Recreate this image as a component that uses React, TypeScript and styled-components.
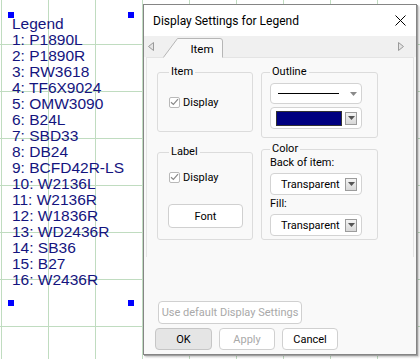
import React from 'react';
import styled, { createGlobalStyle } from 'styled-components';

const Global = createGlobalStyle`
  html, body { margin: 0; padding: 0; background: #fff; }
  body { width: 420px; height: 359px; overflow: hidden; }
`;

const UI = `Roboto, 'Liberation Sans', sans-serif`;

const Canvas = styled.div`
  width: 420px;
  height: 359px;
  display: flex;
  align-items: flex-start;
  background-color: #fff;
  background-image:
    linear-gradient(to right, #c0dcc0 1px, transparent 1px),
    linear-gradient(to bottom, #c0dcc0 1px, transparent 1px);
  background-size: 47px 47px;
  background-position: 1px -3px;
`;

const LegendArea = styled.div`
  position: relative;
  flex: 0 0 143px;
  height: 359px;
  box-sizing: border-box;
  padding: 16px 0 0 12px;
`;

const Handle = styled.div<{ $x: number; $y: number }>`
  position: absolute;
  left: ${(p) => p.$x}px;
  top: ${(p) => p.$y}px;
  width: 6px;
  height: 6px;
  background: #0000ff;
`;

const LegendList = styled.div`
  display: flex;
  flex-direction: column;
  font-family: 'Liberation Sans', Arial, sans-serif;
  font-size: 15.5px;
  line-height: 16px;
  color: #14147e;
  white-space: nowrap;
`;

const Dialog = styled.div`
  margin-top: 4px;
  flex: 0 0 274px;
  height: 351px;
  box-sizing: border-box;
  border: 1px solid #858585;
  box-shadow: 1px 1px 0 #a0a0a0, 2px 2px 2px rgba(0, 0, 0, 0.25);
  background: #f9f9f9;
  display: flex;
  flex-direction: column;
  font-family: ${UI};
  font-size: 11px;
  color: #000;
`;

const TitleBar = styled.div`
  height: 31px;
  flex: 0 0 31px;
  background: #fff;
  display: flex;
  align-items: center;
  justify-content: space-between;
  padding: 0 10px 0 9px;
`;

const Title = styled.span`
  font-size: 12px;
  color: #000;
  white-space: nowrap;
`;

const TabStrip = styled.div`
  height: 21px;
  flex: 0 0 21px;
  background: #f0f0f0;
  display: flex;
  align-items: flex-end;
  padding: 0 12px 0 4px;
`;

const StripArrow = styled.svg`
  align-self: center;
  flex: 0 0 auto;
`;

const Spacer = styled.div`
  flex: 1;
`;

const Tab = styled.div`
  position: relative;
  z-index: 1;
  margin-left: 9px;
  margin-bottom: -1px;
  width: 60px;
  height: 20px;
  box-sizing: border-box;
  padding: 1px 0 0 18px;
  display: flex;
  align-items: center;
  justify-content: center;
  font-size: 11.5px;
`;

const TabShape = styled.svg`
  position: absolute;
  inset: 0;
  z-index: -1;
`;

const Body = styled.div`
  flex: 1;
  display: flex;
  flex-direction: column;
`;

const TabPage = styled.div`
  margin: 0 2px;
  height: 200px;
  box-sizing: border-box;
  border: 1px solid #e4e4e4;
  border-bottom: none;
  padding: 7px 0 0 10px;
  display: grid;
  grid-template-columns: 96px 117px;
  column-gap: 8px;
  align-items: start;
`;

const Column = styled.div<{ $gap: number }>`
  display: flex;
  flex-direction: column;
  gap: ${(p) => p.$gap}px;
`;

const Group = styled.fieldset<{ $h: number; $pt: number; $pl: number }>`
  margin: 0;
  height: ${(p) => p.$h}px;
  box-sizing: border-box;
  border: 1px solid #dcdcdc;
  border-radius: 3px;
  padding: ${(p) => p.$pt}px 0 0 ${(p) => p.$pl}px;
  display: flex;
  flex-direction: column;
  align-items: flex-start;
  min-width: 0;
`;

const GroupLabel = styled.legend`
  padding: 0 2px;
  margin-left: 0;
  font-size: 11px;
  line-height: 14px;
`;

const CheckRow = styled.label`
  display: flex;
  align-items: center;
  gap: 3px;
  height: 14px;
  font-size: 11px;
`;

const CheckBox = styled.span`
  width: 11px;
  height: 11px;
  box-sizing: border-box;
  border: 1px solid #b9b9b9;
  border-radius: 2px;
  background: #fff;
  display: flex;
  align-items: center;
  justify-content: center;
`;

const Button = styled.button<{ $w: number; $h: number; $primary?: boolean }>`
  width: ${(p) => p.$w}px;
  height: ${(p) => p.$h}px;
  box-sizing: border-box;
  border: 1px solid ${(p) => (p.$primary ? '#c6c6c6' : '#d0d0d0')};
  border-radius: 4px;
  background: ${(p) => (p.$primary ? '#e5e5e5' : '#fff')};
  font-family: ${UI};
  font-size: 11px;
  color: #000;
  padding: 0;
  white-space: nowrap;
  &:disabled {
    color: #a9a9a9;
  }
`;

const FontButton = styled(Button)`
  margin-top: 20px;
  margin-left: -1px;
`;

const Dropdown = styled.div<{ $h: number }>`
  width: 92px;
  height: ${(p) => p.$h}px;
  box-sizing: border-box;
  border: 1px solid #d3d3d3;
  border-radius: 4px;
  background: #fff;
  display: flex;
  align-items: center;
  padding: 0 4px 0 5px;
  flex: 0 0 auto;
`;

const LineSample = styled.div`
  width: 61px;
  height: 1px;
  background: #000;
  margin-left: 2px;
`;

const Swatch = styled.div`
  width: 66px;
  height: 15px;
  box-sizing: border-box;
  border: 1px solid #333;
  background: #000080;
`;

const DropText = styled.span`
  padding-left: 5px;
  font-size: 11px;
  color: #000;
`;

const DropButton = styled.span`
  width: 12px;
  height: 13px;
  box-sizing: border-box;
  border: 1px solid #9c9c9c;
  background: linear-gradient(#f4f4f4, #d8d8d8);
  display: flex;
  align-items: center;
  justify-content: center;
`;

const FieldCaption = styled.div<{ $mt: number }>`
  margin-top: ${(p) => p.$mt}px;
  height: 14px;
  line-height: 14px;
  font-size: 11px;
`;

const Stack = styled.div<{ $mt: number }>`
  margin-top: ${(p) => p.$mt}px;
  display: flex;
  flex-direction: column;
`;

const Footer = styled.div`
  margin-top: auto;
  display: flex;
  flex-direction: column;
  padding-bottom: 4px;
`;

const DefaultRow = styled.div`
  padding-left: 14px;
  margin-bottom: 4px;
`;

const ButtonRow = styled.div`
  display: flex;
  gap: 7px;
  padding-left: 11px;
`;

const Check = () => (
  <svg width="9" height="8" viewBox="0 0 9 8">
    <path d="M1 4.2 L3.4 6.5 L8 1.2" fill="none" stroke="#8a8a8a" strokeWidth="1.2" />
  </svg>
);

const DownTri = ({ color = '#555' }: { color?: string }) => (
  <svg width="7" height="4" viewBox="0 0 7 4">
    <path d="M0 0 H7 L3.5 4 Z" fill={color} />
  </svg>
);

const CheckField = () => (
  <CheckRow>
    <CheckBox>
      <Check />
    </CheckBox>
    Display
  </CheckRow>
);

const ChoiceDropdown = ({ text }: { text: string }) => (
  <Dropdown $h={22}>
    <DropText>{text}</DropText>
    <Spacer />
    <DropButton>
      <DownTri />
    </DropButton>
  </Dropdown>
);

const items = [
  'Legend',
  '1: P1890L',
  '2: P1890R',
  '3: RW3618',
  '4: TF6X9024',
  '5: OMW3090',
  '6: B24L',
  '7: SBD33',
  '8: DB24',
  '9: BCFD42R-LS',
  '10: W2136L',
  '11: W2136R',
  '12: W1836R',
  '13: WD2436R',
  '14: SB36',
  '15: B27',
  '16: W2436R',
];

export default function App() {
  return (
    <>
      <Global />
      <Canvas>
        <LegendArea>
          <Handle $x={8} $y={12} />
          <Handle $x={128} $y={12} />
          <Handle $x={8} $y={300} />
          <Handle $x={128} $y={300} />
          <LegendList>
            {items.map((t) => (
              <span key={t}>{t}</span>
            ))}
          </LegendList>
        </LegendArea>

        <Dialog>
          <TitleBar>
            <Title>Display Settings for Legend</Title>
            <svg width="11" height="11" viewBox="0 0 11 11">
              <path d="M0.5 0.5 L10.5 10.5 M10.5 0.5 L0.5 10.5" stroke="#000" strokeWidth="1" />
            </svg>
          </TitleBar>

          <TabStrip>
            <StripArrow width="6" height="9" viewBox="0 0 6 9">
              <path d="M5.5 0.5 V8.5 L0.5 4.5 Z" fill="#e4e4e4" stroke="#9a9a9a" strokeWidth="1" />
            </StripArrow>
            <Tab>
              <TabShape width="60" height="20" viewBox="0 0 60 20">
                <path d="M0 20 L14.5 0.5 H57 Q59.5 0.5 59.5 3 V20 Z" fill="#f9f9f9" />
                <path d="M0.3 19.5 L14.5 0.5 H57 Q59.5 0.5 59.5 3 V19.5" fill="none" stroke="#b6b6b6" strokeWidth="1" />
              </TabShape>
              Item
            </Tab>
            <Spacer />
            <StripArrow width="6" height="9" viewBox="0 0 6 9">
              <path d="M0.5 0.5 V8.5 L5.5 4.5 Z" fill="#e4e4e4" stroke="#9a9a9a" strokeWidth="1" />
            </StripArrow>
          </TabStrip>

          <Body>
            <TabPage>
              <Column $gap={13}>
                <Group $h={67} $pt={16} $pl={11}>
                  <GroupLabel>Item</GroupLabel>
                  <CheckField />
                </Group>
                <Group $h={95} $pt={11} $pl={11}>
                  <GroupLabel>Label</GroupLabel>
                  <CheckField />
                  <FontButton $w={75} $h={24}>Font</FontButton>
                </Group>
              </Column>
              <Column $gap={4}>
                <Group $h={73} $pt={4} $pl={8}>
                  <GroupLabel>Outline</GroupLabel>
                  <Stack $mt={0}>
                    <Dropdown $h={21}>
                      <LineSample />
                      <Spacer />
                      <DownTri color="#8a8a8a" />
                    </Dropdown>
                    <Stack $mt={3}>
                      <Dropdown $h={22}>
                        <Swatch />
                        <Spacer />
                        <DropButton>
                          <DownTri />
                        </DropButton>
                      </Dropdown>
                    </Stack>
                  </Stack>
                </Group>
                <Group $h={98} $pt={0} $pl={8}>
                  <GroupLabel>Color</GroupLabel>
                  <FieldCaption $mt={0}>Back of item:</FieldCaption>
                  <Stack $mt={3}>
                    <ChoiceDropdown text="Transparent" />
                  </Stack>
                  <FieldCaption $mt={2}>Fill:</FieldCaption>
                  <Stack $mt={3}>
                    <ChoiceDropdown text="Transparent" />
                  </Stack>
                </Group>
              </Column>
            </TabPage>

            <Footer>
              <DefaultRow>
                <Button $w={144} $h={23} disabled>
                  Use default Display Settings
                </Button>
              </DefaultRow>
              <ButtonRow>
                <Button $w={57} $h={22} $primary>
                  OK
                </Button>
                <Button $w={56} $h={22} disabled>
                  Apply
                </Button>
                <Button $w={56} $h={22}>
                  Cancel
                </Button>
              </ButtonRow>
            </Footer>
          </Body>
        </Dialog>
      </Canvas>
    </>
  );
}
